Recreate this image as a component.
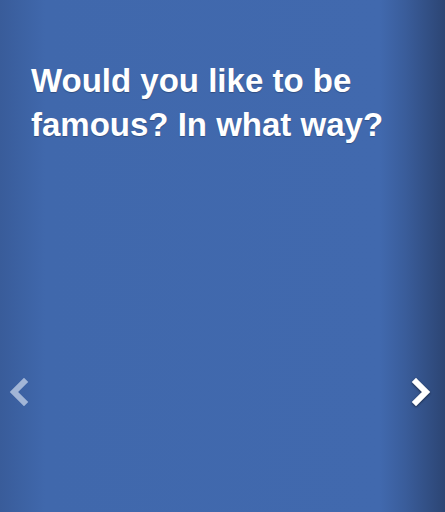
export default function App() {
  return (
    <div className="h-[512px] w-[445px] overflow-hidden bg-[linear-gradient(to_right,#395c9a_0px,#4068ac_45px,#4169ae_380px,#3a5d9b_405px,#2c4574_445px)] relative" style={{ fontFamily: '"Liberation Sans", Arial, sans-serif' }}>
      <div className="px-[31px] pt-[59px]">
        <h1 className="text-[33px] leading-[44px] font-bold text-white [text-shadow:0_1px_1px_rgba(0,0,0,0.25)]">
          Would you like to be famous? In what way?
        </h1>
      </div>
      <button className="absolute left-[8px] top-[378px] opacity-60">
        <svg width="22" height="28" viewBox="0 0 22 28">
          <path d="M16 4 L6 14 L16 24" fill="none" stroke="#e6eefa" strokeWidth="6" strokeLinecap="square" strokeLinejoin="miter" />
        </svg>
      </button>
      <button className="absolute left-[410px] top-[378px] drop-shadow-[0_1px_1px_rgba(0,0,0,0.5)]">
        <svg width="22" height="28" viewBox="0 0 22 28">
          <path d="M6 4 L16 14 L6 24" fill="none" stroke="#ffffff" strokeWidth="6" strokeLinecap="square" strokeLinejoin="miter" />
        </svg>
      </button>
    </div>
  )
}
